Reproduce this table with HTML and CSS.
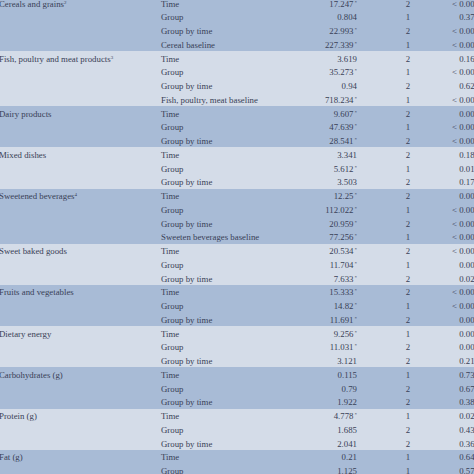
FILE: index.html
```html
<!DOCTYPE html>
<html>
<head>
<meta charset="utf-8">
<link rel="stylesheet" href="styles.css">
</head>
<body>
<table class="stats">
<colgroup><col class="c1"><col class="c2"><col class="c3"><col class="c4"><col class="c5"></colgroup>
<tbody class="dark">
<tr><td class="food">Cereals and grains<sup>2</sup></td><td>Time</td><td class="num">17.247<sup>*</sup></td><td class="df">2</td><td class="p">&lt; 0.001</td></tr>
<tr><td></td><td>Group</td><td class="num">0.804</td><td class="df">1</td><td class="p">0.370</td></tr>
<tr><td></td><td>Group by time</td><td class="num">22.993<sup>*</sup></td><td class="df">2</td><td class="p">&lt; 0.001</td></tr>
<tr><td></td><td>Cereal baseline</td><td class="num">227.339<sup>*</sup></td><td class="df">1</td><td class="p">&lt; 0.001</td></tr>
</tbody>
<tbody class="light">
<tr><td class="food">Fish, poultry and meat products<sup>3</sup></td><td>Time</td><td class="num">3.619</td><td class="df">2</td><td class="p">0.164</td></tr>
<tr><td></td><td>Group</td><td class="num">35.273<sup>*</sup></td><td class="df">1</td><td class="p">&lt; 0.001</td></tr>
<tr><td></td><td>Group by time</td><td class="num">0.94</td><td class="df">2</td><td class="p">0.625</td></tr>
<tr><td></td><td>Fish, poultry, meat baseline</td><td class="num">718.234<sup>*</sup></td><td class="df">1</td><td class="p">&lt; 0.001</td></tr>
</tbody>
<tbody class="dark">
<tr><td class="food">Dairy products</td><td>Time</td><td class="num">9.607<sup>*</sup></td><td class="df">2</td><td class="p">0.008</td></tr>
<tr><td></td><td>Group</td><td class="num">47.639<sup>*</sup></td><td class="df">1</td><td class="p">&lt; 0.001</td></tr>
<tr><td></td><td>Group by time</td><td class="num">28.541<sup>*</sup></td><td class="df">2</td><td class="p">&lt; 0.001</td></tr>
</tbody>
<tbody class="light">
<tr><td class="food">Mixed dishes</td><td>Time</td><td class="num">3.341</td><td class="df">2</td><td class="p">0.188</td></tr>
<tr><td></td><td>Group</td><td class="num">5.612<sup>*</sup></td><td class="df">1</td><td class="p">0.018</td></tr>
<tr><td></td><td>Group by time</td><td class="num">3.503</td><td class="df">2</td><td class="p">0.174</td></tr>
</tbody>
<tbody class="dark">
<tr><td class="food">Sweetened beverages<sup>4</sup></td><td>Time</td><td class="num">12.25<sup>*</sup></td><td class="df">2</td><td class="p">0.002</td></tr>
<tr><td></td><td>Group</td><td class="num">112.022<sup>*</sup></td><td class="df">1</td><td class="p">&lt; 0.001</td></tr>
<tr><td></td><td>Group by time</td><td class="num">20.959<sup>*</sup></td><td class="df">2</td><td class="p">&lt; 0.001</td></tr>
<tr><td></td><td>Sweeten beverages baseline</td><td class="num">77.256<sup>*</sup></td><td class="df">1</td><td class="p">&lt; 0.001</td></tr>
</tbody>
<tbody class="light">
<tr><td class="food">Sweet baked goods</td><td>Time</td><td class="num">20.534<sup>*</sup></td><td class="df">2</td><td class="p">&lt; 0.001</td></tr>
<tr><td></td><td>Group</td><td class="num">11.704<sup>*</sup></td><td class="df">1</td><td class="p">0.001</td></tr>
<tr><td></td><td>Group by time</td><td class="num">7.633<sup>*</sup></td><td class="df">2</td><td class="p">0.022</td></tr>
</tbody>
<tbody class="dark">
<tr><td class="food">Fruits and vegetables</td><td>Time</td><td class="num">15.333<sup>*</sup></td><td class="df">2</td><td class="p">&lt; 0.001</td></tr>
<tr><td></td><td>Group</td><td class="num">14.82<sup>*</sup></td><td class="df">1</td><td class="p">&lt; 0.001</td></tr>
<tr><td></td><td>Group by time</td><td class="num">11.691<sup>*</sup></td><td class="df">2</td><td class="p">0.003</td></tr>
</tbody>
<tbody class="light">
<tr><td class="food">Dietary energy</td><td>Time</td><td class="num">9.256<sup>*</sup></td><td class="df">1</td><td class="p">0.002</td></tr>
<tr><td></td><td>Group</td><td class="num">11.031<sup>*</sup></td><td class="df">2</td><td class="p">0.004</td></tr>
<tr><td></td><td>Group by time</td><td class="num">3.121</td><td class="df">2</td><td class="p">0.210</td></tr>
</tbody>
<tbody class="dark">
<tr><td class="food">Carbohydrates (g)</td><td>Time</td><td class="num">0.115</td><td class="df">1</td><td class="p">0.735</td></tr>
<tr><td></td><td>Group</td><td class="num">0.79</td><td class="df">2</td><td class="p">0.674</td></tr>
<tr><td></td><td>Group by time</td><td class="num">1.922</td><td class="df">2</td><td class="p">0.382</td></tr>
</tbody>
<tbody class="light">
<tr><td class="food">Protein (g)</td><td>Time</td><td class="num">4.778<sup>*</sup></td><td class="df">1</td><td class="p">0.029</td></tr>
<tr><td></td><td>Group</td><td class="num">1.685</td><td class="df">2</td><td class="p">0.431</td></tr>
<tr><td></td><td>Group by time</td><td class="num">2.041</td><td class="df">2</td><td class="p">0.361</td></tr>
</tbody>
<tbody class="dark">
<tr><td class="food">Fat (g)</td><td>Time</td><td class="num">0.21</td><td class="df">1</td><td class="p">0.647</td></tr>
<tr><td></td><td>Group</td><td class="num">1.125</td><td class="df">1</td><td class="p">0.570</td></tr>
<tr><td></td><td>Group by time</td><td class="num">0.530</td><td class="df">2</td><td class="p">0.767</td></tr>
</tbody>
</table>
</body>
</html>
```

FILE: styles.css
```css
html, body {
  margin: 0;
  padding: 0;
  overflow: hidden;
  background: #d4dce8;
}
.stats {
  border-collapse: collapse;
  table-layout: fixed;
  width: 490px;
  margin: -4px 0 0 -1px;
  font-family: "Liberation Serif", "DejaVu Serif", serif;
  font-size: 8.8px;
  color: #394156;
}
.c1 { width: 162px; }
.c2 { width: 139px; }
.c3 { width: 80px; }
.c4 { width: 56px; }
.c5 { width: 53px; }
.stats td {
  box-sizing: border-box;
  height: 13.75px;
  padding: 1.5px 0 0 0;
  line-height: 12.25px;
  white-space: nowrap;
  vertical-align: middle;
}
.stats .num {
  text-align: right;
  padding-right: 23px;
}
.stats .df {
  text-align: center;
}
.stats .p {
  text-align: right;
  padding-right: 10px;
}
.stats sup {
  font-size: 5px;
  line-height: 0;
  vertical-align: 3px;
}
.stats .num sup {
  margin-left: 1px;
}
.dark {
  background: #a8bbd6;
}
.light {
  background: #d4dce8;
}
```
